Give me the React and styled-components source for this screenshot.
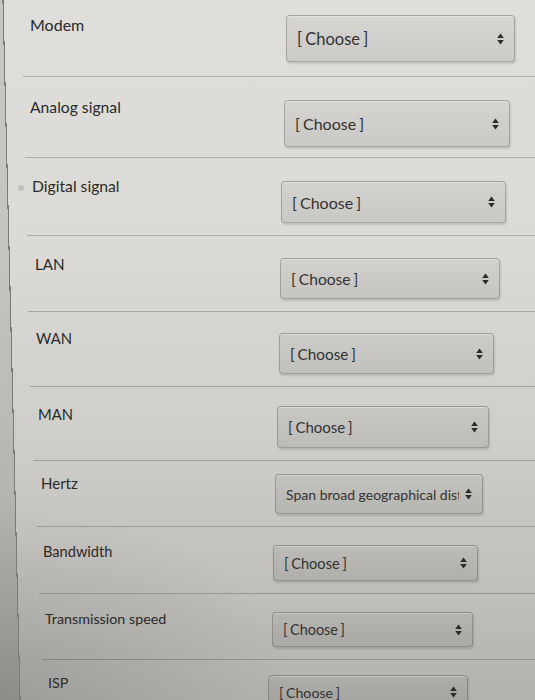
import React from "react"
import styled, { createGlobalStyle } from "styled-components"

const GlobalStyles = createGlobalStyle`
  html, body {
    margin: 0;
    padding: 0;
  }
  body {
    width: 535px;
    height: 700px;
    overflow: hidden;
    font-family: Lato, "Open Sans", sans-serif;
    color: #262626;
    background: #d6d5d1;
  }
`

// the photo leans a little: each row sits a bit further right and the boxes get narrower
const rows = [
  { label: "Modem", line: 23, x: 30, h: 77, capTop: 19, fs: 16, selX: 286, selW: 229, selY: 15, selH: 47, cfs: 16.5 },
  { label: "Analog signal", line: 25, x: 30, h: 81, capTop: 25, fs: 15.7, selX: 284, selW: 226, selY: 23, selH: 47, cfs: 16 },
  { label: "Digital signal", line: 27, x: 32, h: 78, capTop: 23, fs: 15.7, selX: 281, selW: 225, selY: 23, selH: 42, cfs: 16, dot: true },
  { label: "LAN", line: 28, x: 35, h: 76, capTop: 23, fs: 15.2, selX: 280, selW: 220, selY: 22, selH: 41, cfs: 15.6 },
  { label: "WAN", line: 30, x: 36, h: 75, capTop: 22, fs: 14.8, selX: 279, selW: 215, selY: 21, selH: 41, cfs: 15.3 },
  { label: "MAN", line: 33, x: 38, h: 74, capTop: 23, fs: 14.8, selX: 277, selW: 212, selY: 19, selH: 42, cfs: 15 },
  { label: "Hertz", line: 37, x: 41, h: 66, capTop: 17, fs: 15, selX: 275, selW: 208, selY: 13, selH: 40, cfs: 14, value: "Span broad geographical distances" },
  { label: "Bandwidth", line: 39, x: 43, h: 67, capTop: 20, fs: 14.6, selX: 273, selW: 205, selY: 18, selH: 36, cfs: 14.6 },
  { label: "Transmission speed", line: 42, x: 45, h: 66, capTop: 20, fs: 14.3, selX: 272, selW: 201, selY: 18, selH: 35, cfs: 14.4 },
  { label: "ISP", line: 44, x: 48, h: 60, capTop: 18, fs: 14.3, selX: 268, selW: 200, selY: 15, selH: 34, cfs: 14.2 },
]

const Page = styled.div`
  display: flex;
  flex-direction: column;
  width: 535px;
  height: 700px;
  overflow: hidden;
  background:
    linear-gradient(88.6deg, rgba(0, 0, 0, 0.1) 0, rgba(0, 0, 0, 0.1) 19.5px, #7c7b78 19.5px, #7c7b78 20.6px, transparent 20.6px),
    radial-gradient(ellipse 420px 280px at 0% 100%, rgba(60, 55, 50, 0.18), transparent 70%),
    linear-gradient(180deg, #dfdedb 0%, #dbdad6 35%, #cfceca 62%, #bfbeba 85%, #b3b2ae 100%);
`

const Row = styled.div`
  position: relative;
  flex: 0 0 auto;
  box-sizing: border-box;
  height: ${p => p.$h}px;
  margin-left: ${p => p.$inset}px;
  padding-left: ${p => p.$pad}px;
  border-bottom: ${p => (p.$last ? "none" : "1px solid rgba(70, 68, 64, 0.32)")};
  display: flex;
  align-items: flex-start;
`

const Label = styled.div`
  flex: 0 0 ${p => p.$w}px;
  padding-top: ${p => p.$top}px;
  font-size: ${p => p.$fs}px;
  line-height: 1.2;
  color: #2a2a2a;
  white-space: nowrap;
`

const Dot = styled.span`
  position: absolute;
  left: -9px;
  top: 27px;
  width: 6px;
  height: 6px;
  border-radius: 50%;
  background: rgba(0, 0, 0, 0.13);
`

const Select = styled.div`
  box-sizing: border-box;
  margin-top: ${p => p.$top}px;
  width: ${p => p.$w}px;
  height: ${p => p.$h}px;
  padding: 0 10px 0 10px;
  display: flex;
  align-items: center;
  gap: 6px;
  border: 1px solid rgba(60, 58, 55, 0.3);
  border-radius: 4px;
  background: linear-gradient(180deg, rgba(0, 0, 0, 0.035) 0%, rgba(0, 0, 0, 0.065) 60%, rgba(0, 0, 0, 0.08) 100%);
  box-shadow: 1px 2px 2px rgba(0, 0, 0, 0.12), inset 0 1px 0 rgba(255, 255, 255, 0.3);
  font-size: ${p => p.$fs}px;
  color: #333;
`

const Value = styled.span`
  flex: 1;
  overflow: hidden;
  white-space: nowrap;
  word-spacing: ${p => (p.$placeholder ? "-1px" : "0")};
`

const Arrows = styled.svg`
  flex: 0 0 auto;
  width: 7px;
  height: 12px;
`

const SortArrows = () => (
  <Arrows viewBox="0 0 7 12">
    <path d="M3.5 0.5 L6.8 5 L0.2 5 Z" fill="#2b2b2b" />
    <path d="M3.5 11.5 L6.8 7 L0.2 7 Z" fill="#2b2b2b" />
  </Arrows>
)

const App = () => (
  <>
    <GlobalStyles />
    <Page>
      {rows.map((r, i) => (
        <Row
          key={r.label}
          $h={r.h}
          $inset={r.line}
          $pad={r.x - r.line}
          $last={i === rows.length - 1}
        >
          {r.dot && <Dot />}
          <Label $w={r.selX - r.x} $top={Math.round(r.capTop - r.fs * 0.27)} $fs={r.fs}>
            {r.label}
          </Label>
          <Select $top={r.selY} $w={r.selW} $h={r.selH} $fs={r.cfs}>
            <Value $placeholder={!r.value}>{r.value || "[ Choose ]"}</Value>
            <SortArrows />
          </Select>
        </Row>
      ))}
    </Page>
  </>
)

export default App
